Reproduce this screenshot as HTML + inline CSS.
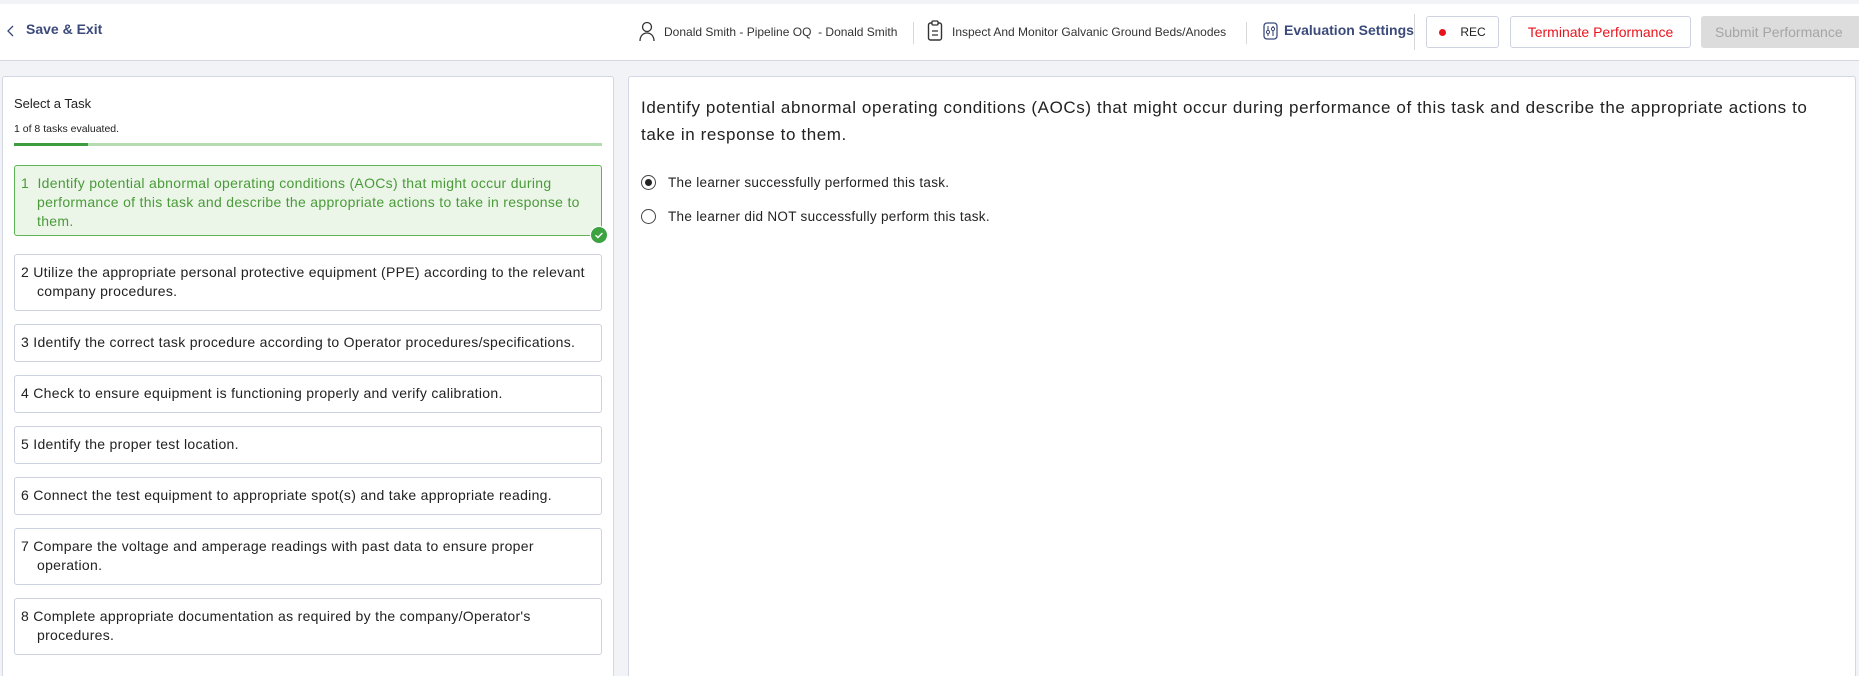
<!DOCTYPE html>
<html><head><meta charset="utf-8"><style>
*{box-sizing:border-box;margin:0;padding:0}
html{width:1859px;height:676px;overflow:hidden}
body{width:1859px;height:676px;overflow:hidden;background:#f2f3f6;font-family:"Liberation Sans",sans-serif;color:#222;position:relative}
.abs{position:absolute}
.hdr{left:0;top:4px;width:1859px;height:57px;background:#fff;border-bottom:1px solid #d3d7e3}
.t{position:absolute;white-space:nowrap}
.sep{position:absolute;top:18px;width:1px;height:22px;background:#d8d8d8}
.btn{position:absolute;top:12px;height:32px;border:1px solid #cfd3e0;border-radius:3px;background:#fff;font-size:14px;display:flex;align-items:center;justify-content:center}
.panel{background:#fff;border:1px solid #d3d7e3;border-radius:3px}
.task{position:absolute;left:14px;width:588px;border:1px solid #cdd1e0;border-radius:3px;background:#fff;font-size:14px;line-height:19px;padding:8px 6px 9px 22px;text-indent:-16px;letter-spacing:.3px;color:#222}
.radio{position:absolute;left:641px;width:15px;height:15px;border:1.5px solid #444;border-radius:50%}
</style></head><body>
<div class="abs hdr">
 <svg class="abs" style="left:6px;top:20px" width="10" height="14" viewBox="0 0 10 14"><path d="M7 2L2 7l5 5" fill="none" stroke="#3b4a7a" stroke-width="1.3"/></svg>
 <div class="t" style="left:26px;top:17px;font-size:14px;font-weight:bold;color:#3b4a7a">Save &amp; Exit</div>
 <svg class="abs" style="left:638px;top:16px" width="18" height="22" viewBox="0 0 18 22"><circle cx="9" cy="7" r="4.5" fill="none" stroke="#333" stroke-width="1.3"/><path d="M2 21c0-5 3-8 7-8s7 3 7 8" fill="none" stroke="#333" stroke-width="1.3"/></svg>
 <div class="t" style="left:664px;top:21px;font-size:12px;color:#333">Donald Smith - Pipeline OQ &nbsp;- Donald Smith</div>
 <div class="sep" style="left:913px"></div>
 <svg class="abs" style="left:927px;top:16px" width="16" height="22" viewBox="0 0 16 22"><rect x="1.5" y="3" width="13" height="17" rx="2" fill="none" stroke="#333" stroke-width="1.4"/><rect x="5" y="1" width="6" height="4" rx="1" fill="#fff" stroke="#333" stroke-width="1.3"/><path d="M5 11h6M5 15h6" stroke="#333" stroke-width="1.3"/></svg>
 <div class="t" style="left:952px;top:21px;font-size:12px;color:#333">Inspect And Monitor Galvanic Ground Beds/Anodes</div>
 <div class="sep" style="left:1246px"></div>
 <svg class="abs" style="left:1263px;top:18px" width="15" height="18" viewBox="0 0 15 18"><rect x="1" y="1" width="13" height="16" rx="3" fill="none" stroke="#3b4a7a" stroke-width="1.3"/><path d="M5 4v10M10 4v10" stroke="#3b4a7a" stroke-width="1.1"/><circle cx="5" cy="10" r="1.6" fill="#fff" stroke="#3b4a7a"/><circle cx="10" cy="7" r="1.6" fill="#fff" stroke="#3b4a7a"/></svg>
 <div class="t" style="left:1284px;top:18px;font-size:14px;font-weight:bold;color:#3b4a7a">Evaluation Settings</div>
 <div class="sep" style="left:1414px;top:10px;height:36px"></div>
 <div class="btn" style="left:1426px;width:73px;font-size:12px"><span style="display:inline-block;width:7px;height:7px;border-radius:50%;background:#e8141c;margin-right:14px"></span>REC</div>
 <div class="btn" style="left:1510px;width:181px;color:#e8141c">Terminate Performance</div>
 <div class="btn" style="left:1701px;width:170px;background:#dcdcdc;border-color:#dcdcdc;color:#a5a5a5;justify-content:flex-start;padding-left:13px">Submit Performance</div>
</div>
<div class="abs panel" style="left:2px;top:76px;width:612px;height:620px"></div>
<div class="abs panel" style="left:628px;top:76px;width:1228px;height:620px"></div>
<div class="t" style="left:14px;top:96px;font-size:13px;color:#222">Select a Task</div>
<div class="t" style="left:14px;top:123px;font-size:10.5px;color:#222">1 of 8 tasks evaluated.</div>
<div class="abs" style="left:14px;top:143px;width:588px;height:3px;background:#b5dcb0"></div>
<div class="abs" style="left:14px;top:143px;width:74px;height:3px;background:#3d9c3f"></div>
<div class="task" style="top:165px;height:71px;background:#ebf6e8;border-color:#5fb556;color:#4a9a3a">1&nbsp; Identify potential abnormal operating conditions (AOCs) that might occur during<br>performance of this task and describe the appropriate actions to take in response to<br>them.</div>
<svg class="abs" style="left:590px;top:226px" width="18" height="18" viewBox="0 0 18 18"><circle cx="9" cy="9" r="8.5" fill="#3da340" stroke="#fff" stroke-width="1"/><path d="M5.5 9.2l2.4 2.3 4.5-4.5" fill="none" stroke="#fff" stroke-width="1.4"/></svg>
<div class="task" style="top:254px;height:57px">2 Utilize the appropriate personal protective equipment (PPE) according to the relevant<br>company procedures.</div>
<div class="task" style="top:324px;height:38px">3 Identify the correct task procedure according to Operator procedures/specifications.</div>
<div class="task" style="top:375px;height:38px">4 Check to ensure equipment is functioning properly and verify calibration.</div>
<div class="task" style="top:426px;height:38px">5 Identify the proper test location.</div>
<div class="task" style="top:477px;height:38px">6 Connect the test equipment to appropriate spot(s) and take appropriate reading.</div>
<div class="task" style="top:528px;height:57px">7 Compare the voltage and amperage readings with past data to ensure proper<br>operation.</div>
<div class="task" style="top:598px;height:57px">8 Complete appropriate documentation as required by the company/Operator's<br>procedures.</div>
<div class="t" style="left:641px;top:94px;font-size:17px;line-height:27px;letter-spacing:.6px;color:#222">Identify potential abnormal operating conditions (AOCs) that might occur during performance of this task and describe the appropriate actions to<br>take in response to them.</div>
<div class="radio" style="top:175px"><div style="width:7px;height:7px;border-radius:50%;background:#222;margin:2.5px"></div></div>
<div class="t" style="left:668px;top:175px;font-size:13.5px;letter-spacing:.3px;color:#222">The learner successfully performed this task.</div>
<div class="radio" style="top:209px"></div>
<div class="t" style="left:668px;top:209px;font-size:13.5px;letter-spacing:.3px;color:#222">The learner did NOT successfully perform this task.</div>
</body></html>
